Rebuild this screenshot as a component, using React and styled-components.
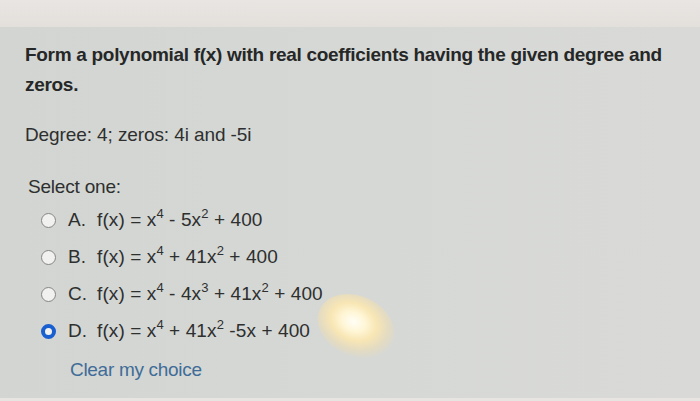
import React from 'react';
import styled, {createGlobalStyle} from 'styled-components';

const Global = createGlobalStyle`
  html, body {
    margin: 0;
    padding: 0;
    background: #e7e4e1;
  }
  body {
    font-family: "Liberation Sans", Arial, sans-serif;
    color: #2e2f2f;
  }
`;

const Page = styled.div`
  width: 700px;
  height: 401px;
  overflow: hidden;
  display: flex;
  flex-direction: column;
  position: relative;
  background: #e7e4e1;
`;

const TopBand = styled.div`
  height: 27px;
  flex-shrink: 0;
  background: linear-gradient(#e9e5e2, #e3e0dc);
`;

const Panel = styled.div`
  flex: 1;
  background: linear-gradient(90deg, #d2d5d2 0%, #d6d8d5 50%, #d9dad7 100%);
  padding: 13px 0 0 25px;
  margin-bottom: 3px;
`;

const Question = styled.div`
  font-size: 19px;
  font-weight: bold;
  letter-spacing: -0.3px;
  line-height: 30px;
  width: 648px;
  color: #262727;
`;

const Info = styled.div`
  font-size: 19px;
  letter-spacing: -0.1px;
  margin-top: 22px;
  line-height: 26px;
`;

const Prompt = styled.div`
  font-size: 19px;
  letter-spacing: -0.2px;
  margin-top: 26px;
  margin-left: 3px;
  line-height: 26px;
`;

const Options = styled.div`
  display: flex;
  flex-direction: column;
  gap: 11px;
  margin-top: 7px;
  margin-left: 16px;
`;

const Option = styled.label`
  display: flex;
  align-items: center;
  height: 26px;
  font-size: 19px;
  letter-spacing: 0.1px;
`;

const Radio = styled.span`
  width: 15px;
  height: 15px;
  box-sizing: border-box;
  border-radius: 50%;
  background: #f1f1ef;
  border: ${p => p.checked ? '4px solid #1a5fd0' : '1.8px solid #858685'};
  flex-shrink: 0;
`;

const Letter = styled.span`
  margin-left: 12px;
  width: 29px;
`;

const Sup = styled.sup`
  font-size: 13px;
  line-height: 0;
  vertical-align: 8px;
`;

const Clear = styled.div`
  font-size: 19px;
  letter-spacing: -0.3px;
  line-height: 26px;
  color: #3f6c98;
  margin-top: 13px;
  margin-left: 45px;
`;

const Glare = styled.div`
  position: absolute;
  left: 316px;
  top: 296px;
  width: 80px;
  height: 60px;
  border-radius: 50%;
  background: radial-gradient(ellipse at 45% 45%, #fffef6 0%, #fff6d6 20%, #f8e6b4 38%, rgba(240,222,175,0.5) 58%, rgba(220,215,200,0) 75%);
  transform: rotate(25deg);
  pointer-events: none;
`;

const options = [
    {key: 'A', f: <>f(x) = x<Sup>4</Sup> - 5x<Sup>2</Sup> + 400</>},
    {key: 'B', f: <>f(x) = x<Sup>4</Sup> + 41x<Sup>2</Sup> + 400</>},
    {key: 'C', f: <>f(x) = x<Sup>4</Sup> - 4x<Sup>3</Sup> + 41x<Sup>2</Sup> + 400</>},
    {key: 'D', f: <>f(x) = x<Sup>4</Sup> + 41x<Sup>2</Sup> -5x + 400</>, checked: true},
];

const App = () => {
    return (
        <Page>
            <Global/>
            <TopBand/>
            <Panel>
                <Question>Form a polynomial f(x) with real coefficients having the given degree and zeros.</Question>
                <Info>Degree: 4; zeros: 4i and -5i</Info>
                <Prompt>Select one:</Prompt>
                <Options>
                    {options.map(o => (
                        <Option key={o.key}>
                            <Radio checked={o.checked}/>
                            <Letter>{o.key}.</Letter>
                            <span>{o.f}</span>
                        </Option>
                    ))}
                </Options>
                <Clear>Clear my choice</Clear>
            </Panel>
            <Glare/>
        </Page>
    );
};

export default App;
